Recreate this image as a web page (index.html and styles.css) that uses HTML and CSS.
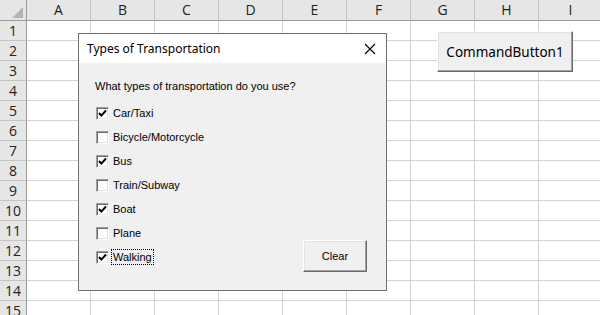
FILE: index.html
```html
<!DOCTYPE html>
<html>
<head>
<meta charset="utf-8">
<link rel="stylesheet" href="styles.css">
</head>
<body>
<div class="sheet">
  <div class="corner"><span class="tri"></span></div>
  <div class="colh">A</div><div class="colh">B</div><div class="colh">C</div><div class="colh">D</div><div class="colh">E</div><div class="colh">F</div><div class="colh">G</div><div class="colh">H</div><div class="colh">I</div>
  <div class="rowh">1</div><div class="c"></div><div class="c"></div><div class="c"></div><div class="c"></div><div class="c"></div><div class="c"></div><div class="c"></div><div class="c"></div><div class="c"></div>
  <div class="rowh">2</div><div class="c"></div><div class="c"></div><div class="c"></div><div class="c"></div><div class="c"></div><div class="c"></div><div class="c"></div><div class="c"></div><div class="c"></div>
  <div class="rowh">3</div><div class="c"></div><div class="c"></div><div class="c"></div><div class="c"></div><div class="c"></div><div class="c"></div><div class="c"></div><div class="c"></div><div class="c"></div>
  <div class="rowh">4</div><div class="c"></div><div class="c"></div><div class="c"></div><div class="c"></div><div class="c"></div><div class="c"></div><div class="c"></div><div class="c"></div><div class="c"></div>
  <div class="rowh">5</div><div class="c"></div><div class="c"></div><div class="c"></div><div class="c"></div><div class="c"></div><div class="c"></div><div class="c"></div><div class="c"></div><div class="c"></div>
  <div class="rowh">6</div><div class="c"></div><div class="c"></div><div class="c"></div><div class="c"></div><div class="c"></div><div class="c"></div><div class="c"></div><div class="c"></div><div class="c"></div>
  <div class="rowh">7</div><div class="c"></div><div class="c"></div><div class="c"></div><div class="c"></div><div class="c"></div><div class="c"></div><div class="c"></div><div class="c"></div><div class="c"></div>
  <div class="rowh">8</div><div class="c"></div><div class="c"></div><div class="c"></div><div class="c"></div><div class="c"></div><div class="c"></div><div class="c"></div><div class="c"></div><div class="c"></div>
  <div class="rowh">9</div><div class="c"></div><div class="c"></div><div class="c"></div><div class="c"></div><div class="c"></div><div class="c"></div><div class="c"></div><div class="c"></div><div class="c"></div>
  <div class="rowh">10</div><div class="c"></div><div class="c"></div><div class="c"></div><div class="c"></div><div class="c"></div><div class="c"></div><div class="c"></div><div class="c"></div><div class="c"></div>
  <div class="rowh">11</div><div class="c"></div><div class="c"></div><div class="c"></div><div class="c"></div><div class="c"></div><div class="c"></div><div class="c"></div><div class="c"></div><div class="c"></div>
  <div class="rowh">12</div><div class="c"></div><div class="c"></div><div class="c"></div><div class="c"></div><div class="c"></div><div class="c"></div><div class="c"></div><div class="c"></div><div class="c"></div>
  <div class="rowh">13</div><div class="c"></div><div class="c"></div><div class="c"></div><div class="c"></div><div class="c"></div><div class="c"></div><div class="c"></div><div class="c"></div><div class="c"></div>
  <div class="rowh">14</div><div class="c"></div><div class="c"></div><div class="c"></div><div class="c"></div><div class="c"></div><div class="c"></div><div class="c"></div><div class="c"></div><div class="c"></div>
  <div class="rowh">15</div><div class="c"></div><div class="c"></div><div class="c"></div><div class="c"></div><div class="c"></div><div class="c"></div><div class="c"></div><div class="c"></div><div class="c"></div>
</div>

<button class="cmdbtn">CommandButton1</button>

<div class="dialog">
  <div class="titlebar">
    <span class="title">Types of Transportation</span>
    <svg class="close" width="12" height="12" viewBox="0 0 12 12"><path d="M1 1 L11 11 M11 1 L1 11" stroke="#000" stroke-width="1.1" fill="none"/></svg>
  </div>
  <div class="body">
    <div class="question">What types of transportation do you use?</div>
    <div class="options">
      <div class="list">
        <div class="opt"><span class="box checked"><svg viewBox="0 0 11 11" width="11" height="11"><path d="M2 5 L4.3 7.6 L9 2.5" stroke="#000" stroke-width="2" fill="none"/></svg></span><span class="lbl">Car/Taxi</span></div>
        <div class="opt"><span class="box"></span><span class="lbl">Bicycle/Motorcycle</span></div>
        <div class="opt"><span class="box checked"><svg viewBox="0 0 11 11" width="11" height="11"><path d="M2 5 L4.3 7.6 L9 2.5" stroke="#000" stroke-width="2" fill="none"/></svg></span><span class="lbl">Bus</span></div>
        <div class="opt"><span class="box"></span><span class="lbl">Train/Subway</span></div>
        <div class="opt"><span class="box checked"><svg viewBox="0 0 11 11" width="11" height="11"><path d="M2 5 L4.3 7.6 L9 2.5" stroke="#000" stroke-width="2" fill="none"/></svg></span><span class="lbl">Boat</span></div>
        <div class="opt"><span class="box"></span><span class="lbl">Plane</span></div>
        <div class="opt"><span class="box checked"><svg viewBox="0 0 11 11" width="11" height="11"><path d="M2 5 L4.3 7.6 L9 2.5" stroke="#000" stroke-width="2" fill="none"/></svg></span><span class="lbl focus">Walking</span></div>
      </div>
      <button class="clearbtn">Clear</button>
    </div>
  </div>
</div>
</body>
</html>
```
FILE: styles.css
```css
html, body {
  margin: 0;
  padding: 0;
  width: 600px;
  height: 315px;
  overflow: hidden;
  background: #fff;
  position: relative;
}

.sheet {
  display: grid;
  grid-template-columns: 27px repeat(9, 64px);
  grid-template-rows: 21px repeat(15, 20px);
  font-family: "Open Sans", "Liberation Sans", sans-serif;
}

.sheet > div {
  box-sizing: border-box;
}

.corner {
  background: #e6e6e6;
  border-right: 1px solid #9b9b9b;
  border-bottom: 1px solid #9b9b9b;
  position: relative;
}

.tri {
  position: absolute;
  right: 3px;
  bottom: 2px;
  width: 0;
  height: 0;
  border-left: 11px solid transparent;
  border-bottom: 11px solid #b4b4b4;
}

.colh {
  background: #e6e6e6;
  border-right: 1px solid #c6c6c6;
  border-bottom: 1px solid #9b9b9b;
  font-size: 14px;
  line-height: 20px;
  text-align: center;
  color: #222;
}

.rowh {
  background: #e6e6e6;
  border-right: 1px solid #9b9b9b;
  border-bottom: 1px solid #c6c6c6;
  font-size: 14px;
  line-height: 20px;
  text-align: center;
  color: #222;
}

.c {
  border-right: 1px solid #d4d4d4;
  border-bottom: 1px solid #d4d4d4;
}

.cmdbtn {
  position: absolute;
  left: 437px;
  top: 31px;
  width: 136px;
  height: 41px;
  margin: 0;
  padding: 0;
  background: #f0f0f0;
  border: 1px solid;
  border-color: #fff #696969 #696969 #fff;
  box-shadow: inset -1px -1px 0 #a0a0a0, inset 1px 1px 0 #e3e3e3;
  font-family: "Noto Sans", "Open Sans", sans-serif;
  font-size: 13.5px;
  color: #000;
}

.dialog {
  position: absolute;
  left: 78px;
  top: 33px;
  width: 309px;
  height: 258px;
  box-sizing: border-box;
  border: 1px solid #707070;
  background: #f0f0f0;
  display: flex;
  flex-direction: column;
}

.titlebar {
  height: 29px;
  background: #fff;
  display: flex;
  align-items: center;
  justify-content: space-between;
  padding: 0 10px 0 8px;
}

.title {
  font-family: "Noto Sans", "Open Sans", sans-serif;
  font-size: 12px;
  color: #000;
}

.close {
  display: block;
}

.body {
  padding: 16px 19px 0 16px;
  font-family: "Liberation Sans", Arial, sans-serif;
  font-size: 11px;
  color: #000;
}

.question {
  height: 14px;
  line-height: 14px;
}

.options {
  margin-top: 8px;
  display: flex;
  justify-content: space-between;
  align-items: flex-end;
}

.list {
  display: flex;
  flex-direction: column;
  padding-bottom: 3px;
}

.opt {
  height: 24px;
  display: flex;
  align-items: center;
  padding-left: 1px;
}

.box {
  width: 13px;
  height: 13px;
  box-sizing: border-box;
  background: #fff;
  border: 1px solid;
  border-color: #a0a0a0 #fff #fff #a0a0a0;
  box-shadow: inset 1px 1px 0 #696969, inset -1px -1px 0 #e3e3e3;
  display: flex;
  align-items: center;
  justify-content: center;
  margin-right: 2px;
}

.box svg {
  display: block;
}

.lbl {
  padding: 1px 1px;
  border: 1px solid transparent;
}

.lbl.focus {
  border: 1px dotted #000;
}

.clearbtn {
  width: 64px;
  height: 32px;
  margin: 0;
  padding: 0;
  background: #f0f0f0;
  border: 1px solid;
  border-color: #fff #696969 #696969 #fff;
  box-shadow: inset -1px -1px 0 #a0a0a0, inset 1px 1px 0 #e3e3e3;
  font-family: "Liberation Sans", Arial, sans-serif;
  font-size: 11px;
  color: #000;
}
```
